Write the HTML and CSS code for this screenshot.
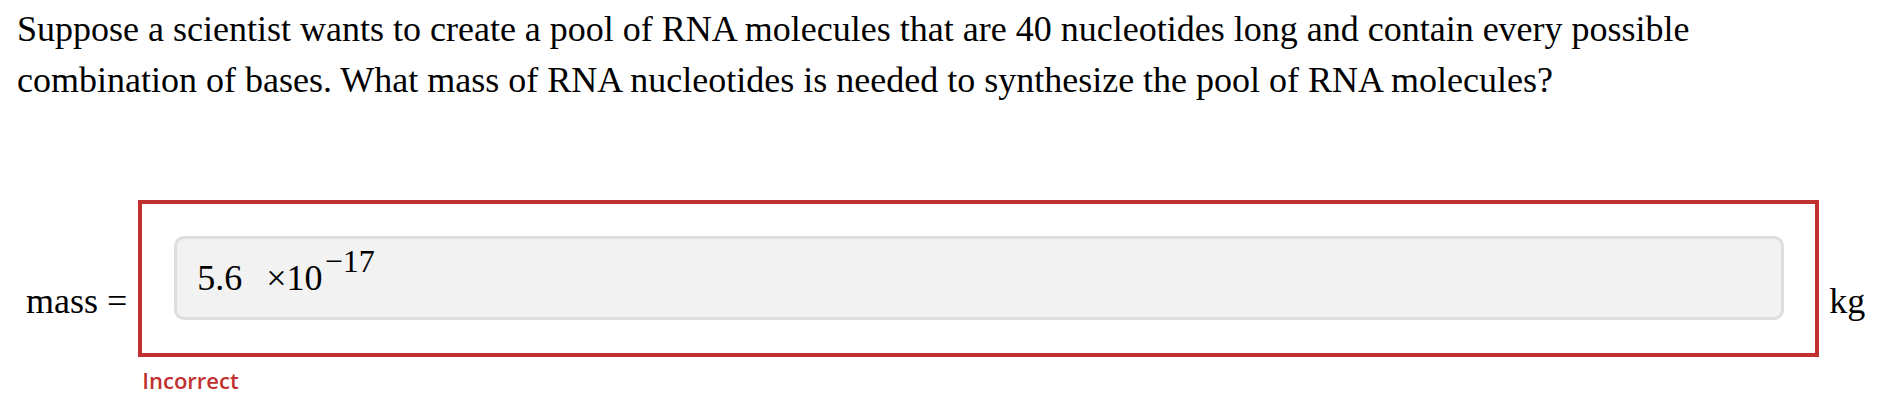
FILE: index.html
```html
<!DOCTYPE html>
<html lang="en">
<head>
<meta charset="utf-8">
<title>RNA pool question</title>
<link rel="stylesheet" href="styles.css">
</head>
<body>
<p class="question">Suppose a scientist wants to create a pool of RNA molecules that are 40 nucleotides long and contain every possible combination of bases. What mass of RNA nucleotides is needed to synthesize the pool of RNA molecules?</p>
<div class="answer-row">
  <span class="label">mass =</span>
  <div class="field">
    <div class="box">
      <div class="input"><span class="mant">5.6</span><span class="times">×10</span><span class="exp">−17</span></div>
    </div>
    <div class="feedback">Incorrect</div>
  </div>
  <span class="unit">kg</span>
</div>
</body>
</html>
```
FILE: styles.css
```css
html, body {
  margin: 0;
  padding: 0;
  background: #ffffff;
}
body {
  font-family: "Liberation Serif", "Times New Roman", serif;
  color: #000000;
  font-size: 36px;
}
.question {
  margin: 4px 0 0 0;
  padding: 0 17px;
  line-height: 51px;
}
.answer-row {
  display: flex;
  align-items: flex-start;
  margin-top: 94px;
  padding-left: 26px;
}
.label, .unit {
  line-height: 51px;
  margin-top: 76px;
  white-space: nowrap;
}
.label {
  margin-right: 11px;
}
.unit {
  margin-left: 10px;
}
.field {
  width: 1681px;
  display: flex;
  flex-direction: column;
}
.box {
  box-sizing: border-box;
  height: 157px;
  border: 4px solid #c0302f;
  padding: 32px 31px 33px 32px;
}
.input {
  box-sizing: border-box;
  height: 84px;
  border: 3px solid #dedede;
  border-radius: 10px;
  background: #f2f2f2;
  padding: 19px 0 0 20px;
  line-height: 40px;
  white-space: nowrap;
}
.times {
  margin-left: 24px;
}
.exp {
  font-size: 32px;
  line-height: 0;
  vertical-align: 18px;
  margin-left: 2px;
}
.feedback {
  margin-top: 10px;
  padding-left: 4px;
  font-family: "Open Sans", "Liberation Sans", sans-serif;
  font-weight: 600;
  font-size: 22px;
  line-height: 26px;
  color: #c0302f;
}
```
